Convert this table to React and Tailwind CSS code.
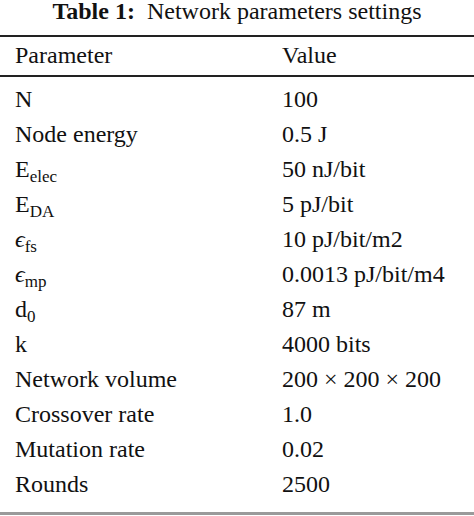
import React from 'react';

const rows = [
  { name: 'N', value: '100' },
  { name: 'Node energy', value: '0.5 J' },
  { name: 'E', sub: 'elec', value: '50 nJ/bit' },
  { name: 'E', sub: 'DA', value: '5 pJ/bit' },
  { name: '\u03F5', sub: 'fs', italic: true, value: '10 pJ/bit/m2' },
  { name: '\u03F5', sub: 'mp', italic: true, value: '0.0013 pJ/bit/m4' },
  { name: 'd', sub: '0', value: '87 m' },
  { name: 'k', value: '4000 bits' },
  { name: 'Network volume', value: '200 \u00D7 200 \u00D7 200' },
  { name: 'Crossover rate', value: '1.0' },
  { name: 'Mutation rate', value: '0.02' },
  { name: 'Rounds', value: '2500' },
];

const App = () => {
  return (
    <div
      className="w-[474px] h-[516px] bg-white text-[#111] text-[24px] overflow-hidden"
      style={{ fontFamily: '"Liberation Serif", "Times New Roman", serif' }}
    >
      {/* Caption */}
      <div className="text-center leading-[22px] h-[35px]">
        <span className="font-bold">Table 1:</span>
        <span className="ml-[12px]">Network parameters settings</span>
      </div>

      {/* Table */}
      <div className="border-t-2 border-[#222]">
        <div className="grid grid-cols-[267px_1fr] px-[15px] h-[40px] leading-[36px] border-b-2 border-[#222]">
          <div>Parameter</div>
          <div>Value</div>
        </div>

        <div className="pt-[5px] pb-[10px] border-b-[3px] border-[#9a9a9a]">
          {rows.map((row, i) => (
            <div key={i} className="grid grid-cols-[267px_1fr] px-[15px] h-[35px] leading-[35px]">
              <div className="whitespace-nowrap">
                <span className={row.italic ? 'italic' : ''}>{row.name}</span>
                {row.sub && (
                  <span className="text-[17px] relative top-[5px]">{row.sub}</span>
                )}
              </div>
              <div className="whitespace-nowrap">{row.value}</div>
            </div>
          ))}
        </div>
      </div>
    </div>
  );
};

export default App;
